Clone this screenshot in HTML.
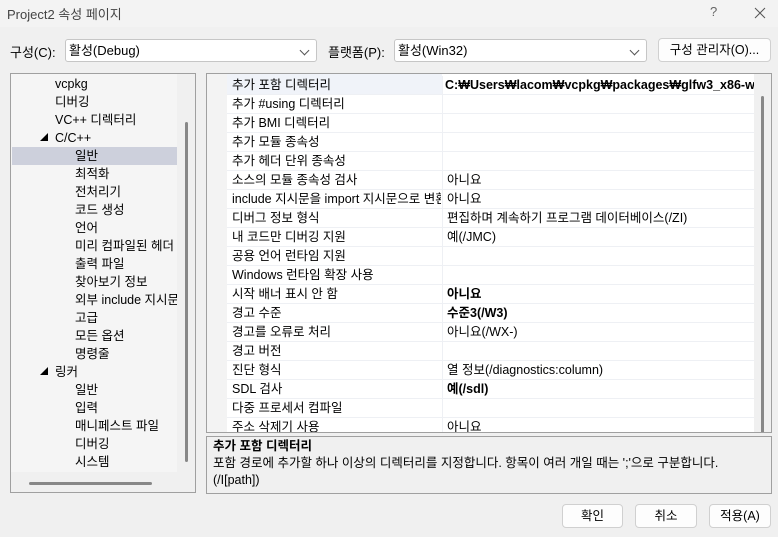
<!DOCTYPE html>
<html><head><meta charset="utf-8"><style>
*{margin:0;padding:0;box-sizing:border-box}
body{width:778px;height:537px;background:#f0f0f0;font-family:"Segoe UI","Liberation Sans","Noto Sans CJK KR",sans-serif;font-size:12px;color:#000;position:relative;overflow:hidden}
.a{position:absolute;white-space:nowrap}
.title{left:0;top:0;width:778px;height:27px;background:#f3f3f3}
.combo{background:#fff;border:1px solid #c6c6c6;border-radius:3px;height:23px;line-height:21px;padding-left:3px;font-size:13px}
.btn{background:#fdfdfd;border:1px solid #d0d0d0;border-radius:4px;height:24px;line-height:22px;text-align:center;font-size:12.5px}
.chev{position:absolute;right:8px;top:7px;width:7px;height:7px;border-right:1px solid #555;border-bottom:1px solid #555;transform:rotate(45deg)}
.tree{left:10px;top:73px;width:186px;height:420px;border:1px solid #a0a0a0;background:#f5f5f5}
.ti{position:absolute;height:18px;line-height:18px;font-size:12.5px}
.grid{left:206px;top:73px;width:566px;height:360px;border:1px solid #a0a0a0;background:#fff;overflow:hidden}
.row{position:absolute;left:20px;width:535px;height:19px;border-bottom:1px solid #eef0f4;line-height:18px;font-size:12.5px}
.row .n{position:absolute;left:5px;width:209px;overflow:hidden}
.row .v{position:absolute;left:215px;border-left:1px solid #eef0f4;padding-left:4px;width:320px;overflow:hidden;height:18px}
.desc{left:206px;top:436px;width:566px;height:58px;border:1px solid #a0a0a0;background:#f0f0f0;padding:1px 6px;font-size:12.5px;line-height:17px}
</style></head><body>
<div class="a title"></div>
<div class="a" style="left:7px;top:4px;font-size:13px;color:#444">Project2 속성 페이지</div>
<div class="a" style="left:710px;top:4px;font-size:13px;color:#666">?</div>
<svg class="a" style="left:754px;top:7px" width="12" height="12"><path d="M1 1L11 11M11 1L1 11" stroke="#555" stroke-width="1"/></svg>

<div class="a" style="left:10px;top:42px;font-size:13px">구성(C):</div>
<div class="a combo" style="left:65px;top:39px;width:252px">활성(Debug)<span class="chev"></span></div>
<div class="a" style="left:328px;top:42px;font-size:13px">플랫폼(P):</div>
<div class="a combo" style="left:394px;top:39px;width:253px">활성(Win32)<span class="chev"></span></div>
<div class="a btn" style="left:658px;top:38px;width:113px">구성 관리자(O)...</div>

<div class="a tree">
<div style="position:absolute;left:1px;top:73px;width:165px;height:18px;background:#cdd0dc"></div>
<div class="ti" style="left:44px;top:1px">vcpkg</div>
<div class="ti" style="left:44px;top:19px">디버깅</div>
<div class="ti" style="left:44px;top:37px">VC++ 디렉터리</div>
<div class="ti" style="left:29px;top:55px;font-size:8px">◢</div><div class="ti" style="left:44px;top:55px">C/C++</div>
<div class="ti" style="left:64px;top:73px">일반</div>
<div class="ti" style="left:64px;top:91px">최적화</div>
<div class="ti" style="left:64px;top:109px">전처리기</div>
<div class="ti" style="left:64px;top:127px">코드 생성</div>
<div class="ti" style="left:64px;top:145px">언어</div>
<div class="ti" style="left:64px;top:163px">미리 컴파일된 헤더</div>
<div class="ti" style="left:64px;top:181px">출력 파일</div>
<div class="ti" style="left:64px;top:199px">찾아보기 정보</div>
<div class="ti" style="left:64px;top:217px;width:102px;overflow:hidden">외부 include 지시문</div>
<div class="ti" style="left:64px;top:235px">고급</div>
<div class="ti" style="left:64px;top:253px">모든 옵션</div>
<div class="ti" style="left:64px;top:271px">명령줄</div>
<div class="ti" style="left:29px;top:289px;font-size:8px">◢</div><div class="ti" style="left:44px;top:289px">링커</div>
<div class="ti" style="left:64px;top:307px">일반</div>
<div class="ti" style="left:64px;top:325px">입력</div>
<div class="ti" style="left:64px;top:343px">매니페스트 파일</div>
<div class="ti" style="left:64px;top:361px">디버깅</div>
<div class="ti" style="left:64px;top:379px">시스템</div>
<div style="position:absolute;left:166px;top:0;width:18px;height:398px;background:#f0f0f0"></div>
<div style="position:absolute;left:174px;top:48px;width:3px;height:340px;background:#888;border-radius:2px"></div>
<div style="position:absolute;left:0;top:398px;width:184px;height:20px;background:#f0f0f0"></div>
<div style="position:absolute;left:18px;top:408px;width:123px;height:3px;background:#888;border-radius:2px"></div>
</div>

<div class="a grid">
<div style="position:absolute;left:0;top:0;width:20px;height:360px;background:#f3f3f3"></div>
<div style="position:absolute;left:20px;top:0;width:215px;height:21px;background:#f0f3f9"></div>
<div class="row" style="top:2px"><span class="n">추가 포함 디렉터리</span><span class="v" style="font-weight:bold;padding-left:2px">C:₩Users₩lacom₩vcpkg₩packages₩glfw3_x86-windows</span></div>
<div class="row" style="top:21px"><span class="n">추가 #using 디렉터리</span><span class="v"></span></div>
<div class="row" style="top:40px"><span class="n">추가 BMI 디렉터리</span><span class="v"></span></div>
<div class="row" style="top:59px"><span class="n">추가 모듈 종속성</span><span class="v"></span></div>
<div class="row" style="top:78px"><span class="n">추가 헤더 단위 종속성</span><span class="v"></span></div>
<div class="row" style="top:97px"><span class="n">소스의 모듈 종속성 검사</span><span class="v">아니요</span></div>
<div class="row" style="top:116px"><span class="n">include 지시문을 import 지시문으로 변환</span><span class="v">아니요</span></div>
<div class="row" style="top:135px"><span class="n">디버그 정보 형식</span><span class="v">편집하며 계속하기 프로그램 데이터베이스(/ZI)</span></div>
<div class="row" style="top:154px"><span class="n">내 코드만 디버깅 지원</span><span class="v">예(/JMC)</span></div>
<div class="row" style="top:173px"><span class="n">공용 언어 런타임 지원</span><span class="v"></span></div>
<div class="row" style="top:192px"><span class="n">Windows 런타임 확장 사용</span><span class="v"></span></div>
<div class="row" style="top:211px"><span class="n">시작 배너 표시 안 함</span><span class="v" style="font-weight:bold">아니요</span></div>
<div class="row" style="top:230px"><span class="n">경고 수준</span><span class="v" style="font-weight:bold">수준3(/W3)</span></div>
<div class="row" style="top:249px"><span class="n">경고를 오류로 처리</span><span class="v">아니요(/WX-)</span></div>
<div class="row" style="top:268px"><span class="n">경고 버전</span><span class="v"></span></div>
<div class="row" style="top:287px"><span class="n">진단 형식</span><span class="v">열 정보(/diagnostics:column)</span></div>
<div class="row" style="top:306px"><span class="n">SDL 검사</span><span class="v" style="font-weight:bold">예(/sdl)</span></div>
<div class="row" style="top:325px"><span class="n">다중 프로세서 컴파일</span><span class="v"></span></div>
<div class="row" style="top:344px"><span class="n">주소 삭제기 사용</span><span class="v">아니요</span></div>
<div style="position:absolute;left:547px;top:0;width:18px;height:360px;background:#f0f0f0"></div>
<div style="position:absolute;left:554px;top:22px;width:3px;height:338px;background:#888;border-radius:2px"></div>
</div>

<div class="a desc"><b>추가 포함 디렉터리</b><br>포함 경로에 추가할 하나 이상의 디렉터리를 지정합니다. 항목이 여러 개일 때는 ';'으로 구분합니다.<br>(/I[path])</div>

<div class="a btn" style="left:562px;top:504px;width:61px">확인</div>
<div class="a btn" style="left:635px;top:504px;width:62px">취소</div>
<div class="a btn" style="left:709px;top:504px;width:62px">적용(A)</div>
</body></html>
